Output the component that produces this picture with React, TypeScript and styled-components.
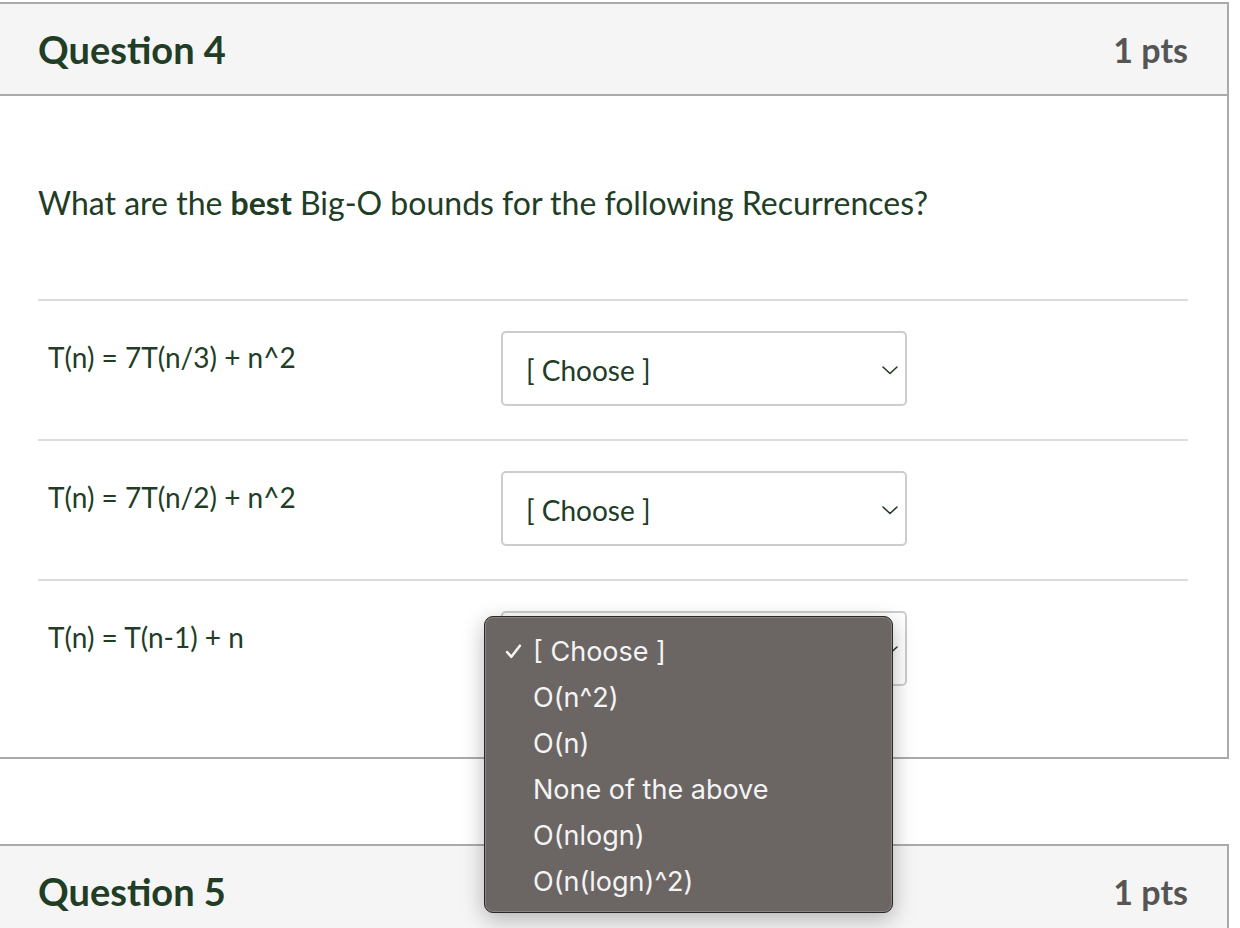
import React from 'react';
import styled, { createGlobalStyle } from 'styled-components';

const GlobalStyle = createGlobalStyle`
  html, body {
    margin: 0;
    padding: 0;
    background: #ffffff;
  }
  body {
    font-family: Lato, "Noto Sans", sans-serif;
    color: #213d25;
  }
`;

const Page = styled.div`
  padding-top: 2px;
  width: 1240px;
  height: 928px;
  overflow: hidden;
`;

const Card = styled.section<{ $gap?: number }>`
  width: 1227px;
  border: 2px solid #aaaaaa;
  border-left: 0;
  margin-top: ${({ $gap }) => $gap ?? 0}px;
  background: #ffffff;
`;

const Header = styled.header`
  display: flex;
  align-items: center;
  justify-content: space-between;
  height: 90px;
  padding: 0 39px 0 38px;
  background: #f5f5f5;
  border-bottom: 2px solid #aaaaaa;
`;

const Title = styled.h2`
  margin: 0;
  font-size: 38px;
  font-weight: 700;
  color: #213d25;
`;

const Points = styled.span`
  font-size: 34px;
  font-weight: 700;
  color: #555555;
`;

const Body = styled.div`
  padding: 87px 39px 0 38px;
`;

const Prompt = styled.p`
  margin: 0 0 76px;
  font-size: 32px;
  line-height: 40px;
  b {
    font-weight: 700;
  }
`;

const Row = styled.div<{ $last?: boolean }>`
  display: flex;
  align-items: flex-start;
  padding: 30px 0 ${({ $last }) => ($last ? 71 : 33)}px 10px;
  border-top: 2px solid #dddddd;
`;

const Equation = styled.div`
  width: 453px;
  padding-top: 11px;
  font-size: 28px;
  line-height: 30px;
`;

const SelectWrap = styled.div`
  position: relative;
`;

const SelectBox = styled.div`
  box-sizing: border-box;
  display: flex;
  align-items: center;
  justify-content: space-between;
  width: 406px;
  height: 75px;
  padding: 2px 6px 0 23px;
  border: 2px solid #cccccc;
  border-radius: 5px;
  background: #ffffff;
  font-size: 28px;
  color: #213d25;
`;

const Menu = styled.ul`
  position: absolute;
  left: -17px;
  top: 5px;
  z-index: 2;
  box-sizing: border-box;
  width: 409px;
  height: 297px;
  margin: 0;
  padding: 11px 0 0;
  list-style: none;
  background: #6b6664;
  border: 1px solid #2a2827;
  border-radius: 9px;
  box-shadow: inset 0 0 0 1px #8a8584, 0 6px 22px rgba(0, 0, 0, 0.28);
  font-family: Inter, "Noto Sans", sans-serif;
  font-size: 27px;
  color: #f4f4f4;
`;

const MenuItem = styled.li`
  display: flex;
  align-items: center;
  height: 46px;
  padding-left: 20px;
`;

const Check = styled.span`
  width: 28px;
  display: inline-flex;
  align-items: center;
`;

const Chevron = () => (
  <svg width="18" height="12" viewBox="0 0 18 12" fill="none">
    <path d="M2 3 L9 9.5 L16 3" stroke="#213d25" strokeWidth="1.6" strokeLinecap="round" strokeLinejoin="round" />
  </svg>
);

const Tick = () => (
  <svg width="17" height="17" viewBox="0 0 16 16" fill="none">
    <path d="M2 8.5 L6 13 L14 2.5" stroke="#f4f4f4" strokeWidth="2.4" strokeLinecap="round" strokeLinejoin="round" />
  </svg>
);

const options = ['[ Choose ]', 'O(n^2)', 'O(n)', 'None of the above', 'O(nlogn)', 'O(n(logn)^2)'];

const recurrences = ['T(n) = 7T(n/3) + n^2', 'T(n) = 7T(n/2) + n^2', 'T(n) = T(n-1) + n'];

export default function App() {
  return (
    <Page>
      <GlobalStyle />
      <Card>
        <Header>
          <Title>Question 4</Title>
          <Points>1 pts</Points>
        </Header>
        <Body>
          <Prompt>
            What are the <b>best</b> Big-O bounds for the following Recurrences?
          </Prompt>
          {recurrences.map((eq, i) => {
            const open = i === recurrences.length - 1;
            return (
              <Row key={eq} $last={open}>
                <Equation>{eq}</Equation>
                <SelectWrap>
                  <SelectBox>
                    <span>[ Choose ]</span>
                    <Chevron />
                  </SelectBox>
                  {open && (
                    <Menu>
                      {options.map((opt, j) => (
                        <MenuItem key={opt}>
                          <Check>{j === 0 && <Tick />}</Check>
                          {opt}
                        </MenuItem>
                      ))}
                    </Menu>
                  )}
                </SelectWrap>
              </Row>
            );
          })}
        </Body>
      </Card>
      <Card $gap={85}>
        <Header>
          <Title>Question 5</Title>
          <Points>1 pts</Points>
        </Header>
      </Card>
    </Page>
  );
}
